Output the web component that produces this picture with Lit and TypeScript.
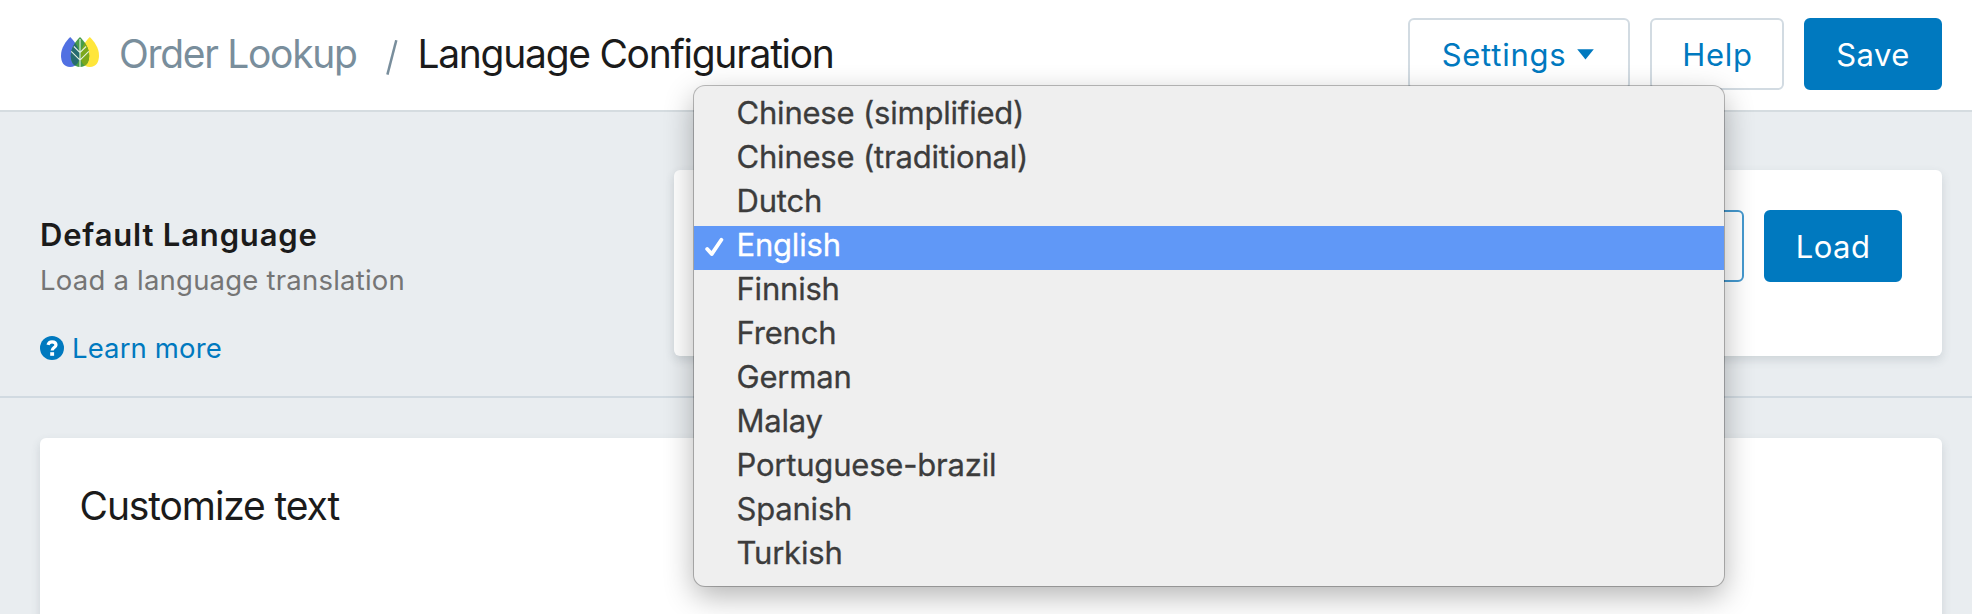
import { LitElement, html, css, svg } from "lit";
import { customElement, property, state } from "lit/decorators.js";
import { classMap } from "lit/directives/class-map.js";

@customElement("language-menu")
class LanguageMenu extends LitElement {
  @property({ attribute: false }) options: string[] = [];
  @property() selected = "";

  static styles = css`
    :host {
      display: block;
      box-sizing: border-box;
      padding: 8px 0;
      border-radius: 11px;
      background: #efefef;
      box-shadow: 0 0 0 1px rgba(0, 0, 0, 0.25), 0 10px 30px rgba(0, 0, 0, 0.3);
    }
    ul {
      margin: 0;
      padding: 0;
      list-style: none;
    }
    .item {
      display: flex;
      height: 44px;
      box-sizing: border-box;
      font-size: 31px;
      line-height: 37px;
      letter-spacing: -0.2px;
      color: #3c3c3c;
      -webkit-text-stroke: 0.3px currentColor;
      white-space: nowrap;
    }
    .mark {
      flex: none;
      width: 42.5px;
    }
    .mark svg {
      display: block;
      margin: 11px 0 0 10px;
    }
    .current {
      background: #6098f7;
      color: #fff;
    }
  `;

  render() {
    return html`<ul>
      ${this.options.map((name) => {
        const current = name === this.selected;
        return html`<li class=${classMap({ item: true, current })}>
          <span class="mark"
            >${current
              ? html`<svg width="20" height="20" viewBox="0 0 20 20">
                  <path d="M3.2 12 L7.7 17.1 L17.4 2.8" fill="none" stroke="#fff" stroke-width="3.8" stroke-linecap="round" stroke-linejoin="round" />
                </svg>`
              : ""}</span
          ><span>${name}</span>
        </li>`;
      })}
    </ul>`;
  }
}

const leaf = (cx: number, fill: string) =>
  svg`<path d="M${cx} 0 C${cx + 4.5} 4.5 ${cx + 9.2} 11 ${cx + 9.2} 18.5 C${cx + 9.2} 25 ${cx + 6.5} 30 ${cx} 30 C${cx - 6.5} 30 ${cx - 9.2} 25 ${cx - 9.2} 18.5 C${cx - 9.2} 11 ${cx - 4.5} 4.5 ${cx} 0 Z" fill=${fill} />`;

@customElement("app-root")
class AppRoot extends LitElement {
  @state() private language = "English";
  private languages = [
    "Chinese (simplified)",
    "Chinese (traditional)",
    "Dutch",
    "English",
    "Finnish",
    "French",
    "German",
    "Malay",
    "Portuguese-brazil",
    "Spanish",
    "Turkish",
  ];

  static styles = css`
    :host {
      display: flex;
      flex-direction: column;
      position: relative;
      height: 614px;
      overflow: hidden;
      background: #e9edf0;
      font-family: Inter, sans-serif;
      color: #1b1b1b;
    }
    header {
      display: flex;
      flex: none;
      box-sizing: border-box;
      height: 112px;
      padding: 18px 30px 20px 61px;
      border-bottom: 2px solid #d5dce0;
      background: #fff;
    }
    .crumbs {
      display: flex;
      flex: 1;
      align-items: center;
      font-size: 39px;
      line-height: 72px;
      white-space: nowrap;
    }
    .logo {
      flex: none;
      margin: 0 20px 4px 0;
    }
    .parent {
      width: 267px;
      letter-spacing: -1.31px;
      color: #798e9c;
    }
    .slash {
      flex: none;
      margin: 6px 19.5px 0 0;
    }
    h1 {
      margin: 0;
      font: inherit;
      letter-spacing: -1.29px;
    }
    .actions {
      display: flex;
      gap: 20px;
    }
    .btn {
      display: flex;
      align-items: center;
      justify-content: center;
      box-sizing: border-box;
      height: 72px;
      padding: 1px 0 0;
      border: 2px solid #d2dbe2;
      border-radius: 6px;
      background: #fff;
      font: 400 31px/40px Inter, sans-serif;
      letter-spacing: 0.75px;
      color: #0079bf;
      white-space: nowrap;
    }
    .settings {
      width: 222px;
      padding-right: 2px;
      gap: 11px;
    }
    .help {
      width: 134px;
      padding-left: 1px;
    }
    .primary {
      width: 138px;
      border-color: #0079bf;
      background: #0079bf;
      color: #fff;
      letter-spacing: 0.46px;
    }
    .defaults {
      display: flex;
      flex: none;
      box-sizing: border-box;
      height: 286px;
      padding: 58px 30px 40px 40px;
      border-bottom: 2px solid #d1dae1;
    }
    .about {
      flex: none;
      width: 634px;
      box-sizing: border-box;
      padding-top: 42px;
    }
    h2 {
      margin: 0;
      font-size: 31px;
      font-weight: 600;
      line-height: 45px;
      letter-spacing: 0.82px;
    }
    .about p {
      margin: 0 0 23px;
      font-size: 27.5px;
      line-height: 46px;
      letter-spacing: 0.22px;
      color: #757575;
    }
    .learn {
      display: flex;
      align-items: center;
      gap: 8px;
      font-size: 27.5px;
      line-height: 44px;
      letter-spacing: 0.13px;
      color: #0079bf;
    }
    .card {
      box-sizing: border-box;
      border-radius: 6px;
      background: #fff;
      box-shadow: 0 4px 10px rgba(60, 80, 95, 0.16);
    }
    .picker {
      display: flex;
      flex: 1;
      align-items: flex-start;
      gap: 20px;
      padding: 40px;
    }
    .select {
      flex: 1;
      box-sizing: border-box;
      height: 72px;
      border: 2px solid #4599cf;
      border-radius: 6px;
    }
    .custom {
      flex: 1;
      margin: 40px 30px -20px 40px;
      padding: 40px 39.5px;
    }
    .custom h3 {
      margin: 0;
      font-size: 39px;
      font-weight: 400;
      line-height: 56px;
      letter-spacing: -1.11px;
    }
    language-menu {
      position: absolute;
      top: 86px;
      left: 694px;
      width: 1030px;
    }
  `;

  render() {
    return html`
      <header>
        <div class="crumbs">
          <svg class="logo" width="38" height="30" viewBox="0 0 38 30">
            <defs>
              <clipPath id="mid">${leaf(19, "#000")}</clipPath>
            </defs>
            ${leaf(9.2, "#5170e2")} ${leaf(28.8, "#ffe63a")} ${leaf(19, "#479c48")}
            <g clip-path="url(#mid)">${leaf(9.2, "#266b70")} ${leaf(28.8, "#7ca81c")}</g>
            <path d="M19 2 V30 M19 15.6 L12.9 9.5 M19 15.6 L25.1 9.5 M19 23.2 L10.2 14.4 M19 23.2 L27.8 14.4" fill="none" stroke="#e4f0e2" stroke-width="1.1" />
          </svg>
          <span class="parent">Order Lookup</span>
          <svg class="slash" width="12" height="35" viewBox="0 0 12 35">
            <path d="M1.4 34.6 L10.3 0.2" stroke="#798e9c" stroke-width="2.5" />
          </svg>
          <h1>Language Configuration</h1>
        </div>
        <div class="actions">
          <button class="btn settings">
            Settings
            <svg width="17" height="11" viewBox="0 0 17 11"><path d="M0.2 0.2 H16.8 L8.5 10.6 Z" fill="#0079bf" /></svg>
          </button>
          <button class="btn help">Help</button>
          <button class="btn primary">Save</button>
        </div>
      </header>
      <section class="defaults">
        <div class="about">
          <h2>Default Language</h2>
          <p>Load a language translation</p>
          <a class="learn">
            <svg width="24" height="24" viewBox="0 0 24 24">
              <circle cx="12" cy="12" r="12" fill="#0079bf" />
              <path d="M8 8.9 C8.6 6.7 10 5.8 12 5.8 C14.4 5.8 16 7.1 16 8.9 C16 11.6 12.1 11.5 12.1 14.6" fill="none" stroke="#fff" stroke-width="3.2" />
              <rect x="10.2" y="16.2" width="3.9" height="3.6" fill="#fff" />
            </svg>
            <span>Learn more</span>
          </a>
        </div>
        <div class="card picker">
          <div class="select"></div>
          <button class="btn primary">Load</button>
        </div>
      </section>
      <section class="card custom"><h3>Customize text</h3></section>
      <language-menu .options=${this.languages} .selected=${this.language}></language-menu>
    `;
  }
}
